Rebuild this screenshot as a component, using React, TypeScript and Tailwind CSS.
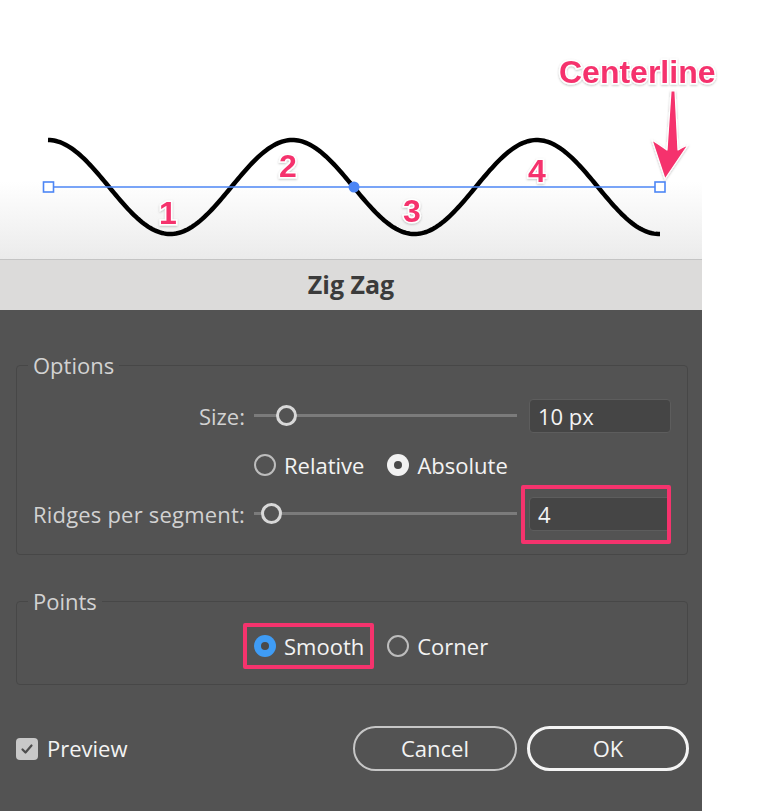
import React from 'react'

// centerline at y=187, amplitude 47, half period ~122px starting on a crest at x=48
const wavePath = (() => {
  const pts: string[] = []
  for (let x = 48; x <= 660; x += 2) {
    const y = 187 - 47 * Math.cos((Math.PI * (x - 48)) / 122.2)
    pts.push(`${x},${y.toFixed(2)}`)
  }
  return 'M' + pts.join(' L')
})()

const PINK = '#f5336d'

function Diagram() {
  const label = {
    fill: PINK,
    stroke: '#ffffff',
    strokeWidth: 3,
    paintOrder: 'stroke',
    fontFamily: '"Liberation Sans", Arial, sans-serif',
    fontWeight: 700,
  } as React.CSSProperties

  return (
    <svg className="absolute inset-0" width="768" height="259" viewBox="0 0 768 259">
      <defs>
        <filter id="soft" x="-20%" y="-20%" width="140%" height="140%">
          <feDropShadow dx="0" dy="1" stdDeviation="1" floodColor="#000" floodOpacity="0.25" />
        </filter>
      </defs>
      <path d={wavePath} fill="none" stroke="#000" strokeWidth="4.5" />
      <line x1="53" y1="187" x2="655" y2="187" stroke="#4d86f5" strokeWidth="1.6" />
      <rect x="43.5" y="182" width="10" height="10" fill="#fff" stroke="#4d86f5" strokeWidth="1.6" />
      <rect x="655" y="182" width="10" height="10" fill="#fff" stroke="#4d86f5" strokeWidth="1.6" />
      <circle cx="354" cy="187" r="5.5" fill="#4d86f5" />

      <g filter="url(#soft)">
        <text x="168" y="224" fontSize="32" textAnchor="middle" style={label}>1</text>
        <text x="288" y="177" fontSize="32" textAnchor="middle" style={label}>2</text>
        <text x="412" y="222" fontSize="32" textAnchor="middle" style={label}>3</text>
        <text x="537" y="182" fontSize="32" textAnchor="middle" style={label}>4</text>
        <text x="559" y="83" fontSize="32" style={label}>Centerline</text>
        <path
          d="M671,91 L675,91 L678,150 Q683,147 688,145 L665,179 L652,140 Q660,145 667,150 Z"
          fill={PINK}
          stroke="#fff"
          strokeWidth="1.2"
          strokeLinejoin="round"
        />
      </g>
    </svg>
  )
}

function Slider({ left }: { left: string }) {
  return (
    <div className="relative w-[263px] h-[22px]">
      <div className="absolute left-0 right-0 top-[9px] h-[3px] bg-[#7b7b7b]" />
      <div
        className={`absolute top-0 w-[21px] h-[21px] rounded-full border-[3px] border-[#d8d8d8] bg-[#535353] ${left}`}
      />
    </div>
  )
}

function Radio({ checked, blue, label }: { checked?: boolean; blue?: boolean; label: string }) {
  return (
    <div className="flex items-center gap-[8px]">
      {checked ? (
        <span
          className={`w-[22px] h-[22px] rounded-full flex items-center justify-center ${
            blue ? 'bg-[#3f9cf5]' : 'bg-[#f2f2f2]'
          }`}
        >
          <span className="w-[8px] h-[8px] rounded-full bg-[#4a4a4a]" />
        </span>
      ) : (
        <span className="w-[22px] h-[22px] rounded-full border-2 border-[#bdbdbd]" />
      )}
      <span className="text-[22px] leading-none text-[#f3f3f3]">{label}</span>
    </div>
  )
}

export default function App() {
  return (
    <div className="w-[768px] h-[811px] bg-white overflow-hidden font-['Open_Sans',_'Noto_Sans',_sans-serif]">
      <div className="relative h-[259px]">
        <div className="w-[702px] h-full bg-linear-to-b from-white from-70% to-[#ebebeb]" />
        <Diagram />
      </div>

      <div className="w-[702px] h-[552px] flex flex-col">
        <div className="h-[51px] border-t border-[#c4c4c4] bg-[#dcdbda] flex items-center justify-center">
          <span className="text-[25px] font-bold text-[#3b3b3b]">Zig Zag</span>
        </div>

        <div className="flex-1 bg-[#535353] pt-[41px]">
          <fieldset className="ml-[16px] mr-[14px] border border-[#474747] rounded-[4px] pt-[20px] pb-[23px]">
            <legend className="ml-[11px] px-[5px] text-[22px] leading-[28px] text-[#d2d2d2]">Options</legend>
            <div className="flex flex-col gap-[15px]">
              <div className="flex items-center h-[34px]">
                <span className="w-[228px] text-right text-[22px] text-[#d2d2d2]">Size:</span>
                <div className="ml-[9px]">
                  <Slider left="left-[22px]" />
                </div>
                <div className="ml-[12px] w-[142px] h-[34px] rounded-[4px] border border-[#5d5d5d] bg-[#454545] pl-[8px] flex items-center text-[22px] text-[#f3f3f3]">
                  10 px
                </div>
              </div>

              <div className="flex items-center h-[34px] pl-[237px] gap-[23px]">
                <Radio label="Relative" />
                <Radio checked label="Absolute" />
              </div>

              <div className="flex items-center h-[34px]">
                <span className="w-[228px] text-right text-[22px] tracking-[0.2px] text-[#d2d2d2]">Ridges per segment:</span>
                <div className="ml-[9px]">
                  <Slider left="left-[7px]" />
                </div>
                <div className="relative ml-[12px] w-[142px] h-[34px]">
                  <div className="w-full h-full rounded-[4px] border border-[#5d5d5d] bg-[#454545] pl-[8px] flex items-center text-[22px] text-[#f3f3f3]">
                    4
                  </div>
                  <span className="absolute -left-[8px] -top-[12px] -bottom-[13px] right-0 border-4 border-[#f5336d] rounded-[2px]" />
                </div>
              </div>
            </div>
          </fieldset>

          <fieldset className="mt-[32px] ml-[16px] mr-[14px] border border-[#474747] rounded-[4px] pt-[8px] pb-[15px]">
            <legend className="ml-[11px] px-[5px] text-[22px] leading-[28px] text-[#d2d2d2]">Points</legend>
            <div className="flex items-center h-[46px] pl-[226px]">
              <div className="h-[46px] border-4 border-[#f5336d] rounded-[2px] pl-[7px] pr-[6px] flex items-center">
                <Radio checked blue label="Smooth" />
              </div>
              <div className="ml-[13px]">
                <Radio label="Corner" />
              </div>
            </div>
          </fieldset>

          <div className="mt-[41px] h-[45px] pl-[16px] pr-[13px] flex items-center">
            <div className="flex items-center gap-[9px]">
              <span className="w-[22px] h-[22px] rounded-[4px] bg-[#c8c8c8] flex items-center justify-center">
                <svg width="14" height="14" viewBox="0 0 14 14">
                  <path d="M2.5 7.5 L5.5 10.5 L11.5 3.5" fill="none" stroke="#4d4d4d" strokeWidth="2.2" strokeLinecap="round" strokeLinejoin="round" />
                </svg>
              </span>
              <span className="text-[22px] text-[#f3f3f3]">Preview</span>
            </div>
            <div className="ml-auto flex items-center gap-[10px]">
              <button className="w-[164px] h-[45px] rounded-full border-2 border-[#c6c6c6] text-[22px] text-[#f3f3f3]">
                Cancel
              </button>
              <button className="w-[162px] h-[45px] rounded-full border-[3px] border-[#f4f4f4] text-[22px] text-[#f3f3f3]">
                OK
              </button>
            </div>
          </div>
        </div>
      </div>
    </div>
  )
}
